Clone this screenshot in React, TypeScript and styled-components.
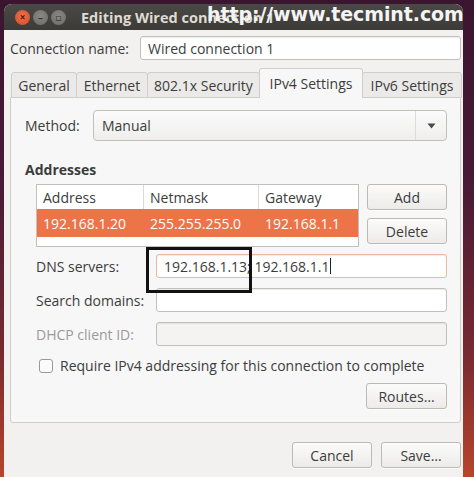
import styled, { createGlobalStyle } from 'styled-components';

const Global = createGlobalStyle`
  html, body { margin: 0; padding: 0; }
  body {
    width: 474px;
    height: 477px;
    overflow: hidden;
    font-family: "Open Sans", "DejaVu Sans", sans-serif;
  }
`;

const Desktop = styled.div`
  width: 474px;
  height: 477px;
  box-sizing: border-box;
  padding: 4px 11px 0 4px;
  background: linear-gradient(180deg, #3b1530 0%, #4a1a36 40%, #7a2a30 75%, #b8452c 100%);
  position: relative;
  overflow: hidden;
`;

const Window = styled.div`
  height: 100%;
  display: flex;
  flex-direction: column;
  border-radius: 8px 8px 0 0;
  overflow: hidden;
  background: #f2f1f0;
`;

const TitleBar = styled.div`
  height: 26px;
  flex: none;
  display: flex;
  align-items: center;
  gap: 3px;
  padding: 0 0 0 11px;
  background: linear-gradient(180deg, #4a4946 0%, #3c3b37 100%);
`;

const WinButton = styled.span<{ $close?: boolean }>`
  width: 15px;
  height: 15px;
  border-radius: 50%;
  display: inline-flex;
  align-items: center;
  justify-content: center;
  background: ${p => (p.$close ? 'radial-gradient(circle at 50% 40%, #f0734c, #d2472a)' : 'radial-gradient(circle at 50% 40%, #8a8985, #6a6965)')};
  color: ${p => (p.$close ? '#5a1a0a' : '#3a3a38')};
  font-size: 10px;
  font-weight: bold;
  line-height: 1;
`;

const Title = styled.span`
  margin-left: 12px;
  color: #dfdbd2;
  font-weight: bold;
  font-size: 14.5px;
  white-space: nowrap;
`;

const Watermark = styled.div`
  position: absolute;
  left: 207px;
  top: 3px;
  color: #f4f4f4;
  font-family: "DejaVu Sans", sans-serif;
  font-weight: bold;
  font-size: 19px;
  letter-spacing: -0.1px;
  white-space: nowrap;
`;

const Body = styled.div`
  flex: 1;
  padding: 6px 2px 0 6px;
  display: flex;
  flex-direction: column;
  color: #3c3c3c;
  font-size: 14px;
`;

const NameRow = styled.div`
  display: flex;
  align-items: center;
  height: 24px;
`;

const Label = styled.span<{ $w?: number; $disabled?: boolean }>`
  width: ${p => p.$w ?? 120}px;
  flex: none;
  white-space: nowrap;
  color: ${p => (p.$disabled ? '#9a9a9a' : '#3c3c3c')};
`;

const Entry = styled.div<{ $focus?: boolean; $disabled?: boolean }>`
  flex: 1;
  height: 24px;
  box-sizing: border-box;
  border: 1px solid ${p => (p.$focus ? '#e9b8a8' : '#c3c0bb')};
  border-radius: 3px;
  background: ${p => (p.$disabled ? '#f4f3f2' : '#ffffff')};
  box-shadow: inset 0 1px 1px rgba(0, 0, 0, 0.08);
  padding: 0 7px;
  display: flex;
  align-items: center;
  white-space: nowrap;
  color: #3c3c3c;
`;

const Caret = styled.span`
  display: inline-block;
  width: 1px;
  height: 16px;
  background: #222;
  margin-left: 1px;
`;

const Tabs = styled.div`
  display: flex;
  margin-top: 8px;
  height: 30px;
  align-items: flex-end;
  padding-left: 1px;
`;

const Tab = styled.div<{ $active?: boolean; $w: number }>`
  width: ${p => p.$w}px;
  height: ${p => (p.$active ? 30 : 26)}px;
  box-sizing: border-box;
  display: flex;
  align-items: center;
  justify-content: center;
  white-space: nowrap;
  background: ${p => (p.$active ? '#f7f7f7' : '#ebeae8')};
  border: 1px solid #d0cecb;
  border-bottom: ${p => (p.$active ? 'none' : '1px solid #d0cecb')};
  border-radius: 3px 3px 0 0;
  margin-right: -1px;
  position: relative;
  z-index: ${p => (p.$active ? 1 : 0)};
  color: #3c3c3c;
`;

const Panel = styled.div`
  height: 326px;
  box-sizing: border-box;
  margin-top: -1px;
  border: 1px solid #d0cecb;
  border-radius: 0 0 3px 3px;
  background: #f7f7f7;
  padding: 12px 13px 0 14px;
  display: flex;
  flex-direction: column;
`;

const MethodRow = styled.div`
  display: flex;
  align-items: center;
`;

const Combo = styled.div`
  flex: 1;
  height: 31px;
  box-sizing: border-box;
  border: 1px solid #c3c0bb;
  border-radius: 4px;
  background: linear-gradient(180deg, #fbfbfb, #efeeed);
  display: flex;
  align-items: center;
  padding-left: 8px;
`;

const ComboText = styled.span`
  flex: 1;
`;

const ComboArrow = styled.span`
  width: 30px;
  height: 100%;
  display: flex;
  align-items: center;
  justify-content: center;
  border-left: 1px solid #dddbd8;
`;

const SectionTitle = styled.div`
  font-weight: bold;
  margin-top: 20px;
  height: 18px;
  line-height: 18px;
`;

const Indent = styled.div`
  padding-left: 11px;
  display: flex;
  flex-direction: column;
`;

const AddrRow = styled.div`
  display: flex;
  gap: 8px;
  margin-top: 5px;
`;

const Table = styled.div`
  width: 323px;
  flex: none;
  height: 63px;
  box-sizing: border-box;
  border: 1px solid #c3c0bb;
  background: #fff;
`;

const TableRow = styled.div<{ $selected?: boolean; $header?: boolean }>`
  display: grid;
  grid-template-columns: 107px 115px 1fr;
  height: ${p => (p.$header ? 24 : 28)}px;
  background: ${p => (p.$selected ? '#ec7448' : '#fff')};
  color: ${p => (p.$selected ? '#fff' : '#3c3c3c')};
`;

const Cell = styled.div<{ $header?: boolean }>`
  display: flex;
  align-items: center;
  padding-left: 6px;
  border-right: ${p => (p.$header ? '1px solid #dcdad7' : 'none')};
  white-space: nowrap;
  &:last-child { border-right: none; }
`;

const ButtonCol = styled.div`
  flex: 1;
  display: flex;
  flex-direction: column;
  gap: 8px;
`;

const Button = styled.div<{ $w?: number }>`
  width: ${p => p.$w ?? 80}px;
  height: 26px;
  box-sizing: border-box;
  border: 1px solid #bdbab5;
  border-radius: 3px;
  background: linear-gradient(180deg, #fbfbfa, #ecebe9);
  box-shadow: 0 1px 0 rgba(255, 255, 255, 0.8);
  display: flex;
  align-items: center;
  justify-content: center;
  color: #3c3c3c;
  white-space: nowrap;
`;

const FieldRow = styled.div<{ $top: number }>`
  display: flex;
  align-items: center;
  margin-top: ${p => p.$top}px;
`;

const Annotated = styled.div`
  flex: 1;
  position: relative;
  display: flex;
`;

const Highlight = styled.div`
  position: absolute;
  left: -10px;
  top: -7px;
  width: 106px;
  height: 46px;
  box-sizing: border-box;
  border: 3px solid #111;
  pointer-events: none;
`;

const CheckRow = styled.div`
  display: flex;
  align-items: center;
  gap: 7px;
  margin-top: 10px;
  padding-left: 14px;
`;

const CheckBox = styled.span`
  width: 14px;
  height: 14px;
  box-sizing: border-box;
  border: 1px solid #9c9995;
  border-radius: 3px;
  background: #fbfbfb;
`;

const RightRow = styled.div<{ $top: number }>`
  display: flex;
  justify-content: flex-end;
  gap: 9px;
  margin-top: ${p => p.$top}px;
`;

export default function App() {
  return (
    <Desktop>
      <Global />
      <Window>
        <TitleBar>
          <WinButton $close>×</WinButton>
          <WinButton>–</WinButton>
          <WinButton>▫</WinButton>
          <Title>Editing Wired connection 1</Title>
        </TitleBar>
        <Body>
          <NameRow>
            <Label $w={130}>Connection name:</Label>
            <Entry>Wired connection 1</Entry>
          </NameRow>
          <Tabs>
            <Tab $w={66}>General</Tab>
            <Tab $w={72}>Ethernet</Tab>
            <Tab $w={113}>802.1x Security</Tab>
            <Tab $w={104} $active>IPv4 Settings</Tab>
            <Tab $w={100}>IPv6 Settings</Tab>
          </Tabs>
          <Panel>
            <MethodRow>
              <Label $w={68}>Method:</Label>
              <Combo>
                <ComboText>Manual</ComboText>
                <ComboArrow>
                  <svg width="9" height="6" viewBox="0 0 9 6">
                    <path d="M0.5 0.5 L8.5 0.5 L4.5 5.5 Z" fill="#4a4a4a" />
                  </svg>
                </ComboArrow>
              </Combo>
            </MethodRow>
            <SectionTitle>Addresses</SectionTitle>
            <Indent>
              <AddrRow>
                <Table>
                  <TableRow $header>
                    <Cell $header>Address</Cell>
                    <Cell $header>Netmask</Cell>
                    <Cell $header>Gateway</Cell>
                  </TableRow>
                  <TableRow $selected>
                    <Cell>192.168.1.20</Cell>
                    <Cell>255.255.255.0</Cell>
                    <Cell>192.168.1.1</Cell>
                  </TableRow>
                </Table>
                <ButtonCol>
                  <Button>Add</Button>
                  <Button>Delete</Button>
                </ButtonCol>
              </AddrRow>
              <FieldRow $top={7}>
                <Label $w={120}>DNS servers:</Label>
                <Annotated>
                  <Entry $focus>
                    192.168.1.13; 192.168.1.1
                    <Caret />
                  </Entry>
                  <Highlight />
                </Annotated>
              </FieldRow>
              <FieldRow $top={10}>
                <Label $w={120}>Search domains:</Label>
                <Entry />
              </FieldRow>
              <FieldRow $top={10}>
                <Label $w={120} $disabled>DHCP client ID:</Label>
                <Entry $disabled />
              </FieldRow>
            </Indent>
            <CheckRow>
              <CheckBox />
              <span>Require IPv4 addressing for this connection to complete</span>
            </CheckRow>
            <RightRow $top={8}>
              <Button $w={81}>Routes…</Button>
            </RightRow>
          </Panel>
          <RightRow $top={19}>
            <Button>Cancel</Button>
            <Button>Save…</Button>
          </RightRow>
        </Body>
      </Window>
      <Watermark>http://www.tecmint.com</Watermark>
    </Desktop>
  );
}
